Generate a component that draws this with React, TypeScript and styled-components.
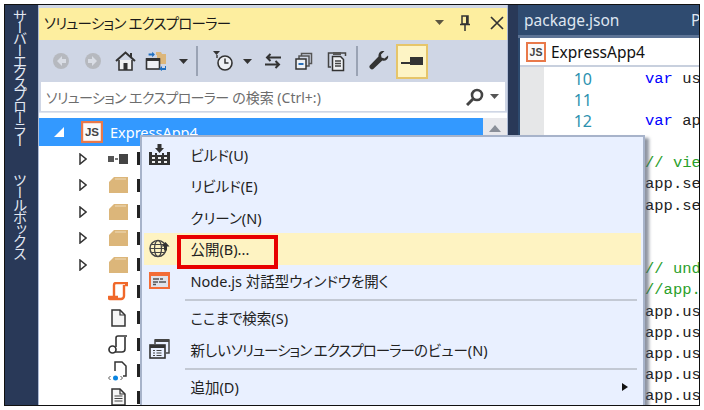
import React from 'react';
import styled, { createGlobalStyle } from 'styled-components';

const Global = createGlobalStyle`
  html, body { margin: 0; padding: 0; background: #fff; }
  body { width: 704px; height: 410px; overflow: hidden; font-family: "Noto Sans", "Noto Sans CJK JP", sans-serif; }
`;
const jp = `font-family: "Noto Sans", "Noto Sans CJK JP", sans-serif; font-feature-settings: "palt";`;

const Frame = styled.div`
  position: relative; box-sizing: border-box;
  margin: 4px 0 0 4px; width: 696px; height: 402px;
  border: 1.5px solid #111; background: #2a3a5a; display: flex; overflow: hidden;
`;
const Sidebar = styled.div`
  width: 32px; flex: none; background: #293958; display: flex; flex-direction: column;
  align-items: center; gap: 30px; padding: 5px 3px 0 0; box-sizing: border-box;
`;
const VText = styled.div<{ $ls: number }>`
  writing-mode: vertical-rl; font-family: "Noto Sans CJK JP", sans-serif; font-feature-settings: "vpal"; color: #e3e8f2; font-size: 14.5px; line-height: 20px; white-space: nowrap;
  letter-spacing: ${p => p.$ls}px;
`;
const Explorer = styled.div`
  width: 470px; flex: none; margin-left: 1px; padding-top: 3px; background: #cfd6e5; display: flex; flex-direction: column; box-sizing: border-box;
  border-left: 1px solid #aebbd4;
  border-right: 1px solid #aebbd4;
`;
const TitleBar = styled.div`
  height: 32px; flex: none; background: #fdee9f; display: flex; align-items: center; padding: 0 3px 0 5px;
`;
const Title = styled.div`
  ${jp} font-size: 14.5px; letter-spacing: -0.8px; color: #1a1a1a; flex: 1; white-space: nowrap; padding-bottom: 3px;
`;
const TitleIcon = styled.div<{ $ml?: number }>`
  display: flex; align-items: center; margin-left: ${p => p.$ml || 0}px; margin-bottom: 3px;
`;
const Toolbar = styled.div`
  height: 42px; flex: none; display: flex; align-items: center; padding-left: 6px; background: #cfd6e5;
`;
const ToolSlot = styled.div<{ $w: number; $active?: boolean }>`
  width: ${p => p.$w}px; height: 35px; flex: none; display: flex; align-items: center; justify-content: center; box-sizing: border-box;
  ${p => p.$active ? 'background: #fdf4c5; border: 2px solid #e6c56a;' : ''}
`;
const ToolSep = styled.div<{ $l: number; $r: number }>`
  width: 2px; height: 30px; flex: none; background: #9aa3b4; margin: 0 ${p => p.$r}px 0 ${p => p.$l}px;
`;
const Search = styled.div`
  height: 29px; flex: none; margin: 0 2px; background: #fff; display: flex; align-items: center; padding: 0 6px 0 5px; box-sizing: border-box;
`;
const SearchText = styled.div`
  ${jp} flex: 1; font-size: 14px; color: #6d6d6d; white-space: nowrap;
`;
const Narrow = styled.span<{ $ls: number }>`letter-spacing: ${p => p.$ls}px;`;
const MagGap = styled.span`width: 6px;`;
const Tree = styled.div`
  flex: 1; background: #fff; margin-top: 1px; position: relative; display: flex; overflow: hidden; padding-top: 5px; border-top: 1px solid #dfe4ee; 
`;
const TreeList = styled.div`
  flex: 1; min-width: 0; background: #fff;
`;
const SelRow = styled.div`
  height: 27.5px; background: #3399ff; display: flex; align-items: center; padding-left: 15px; gap: 17px; color: #fff; ${jp} font-size: 14.5px;
`;
const SelName = styled.span`
  display: flex; align-items: center; gap: 7px;
`;
const Row = styled.div`
  height: 26.5px; display: flex; align-items: center; position: relative; padding-left: 40px; box-sizing: border-box;
`;
const RowIcon = styled.div`
  width: 22px; flex: none; margin-left: 28px; display: flex; justify-content: center;
`;
const Expander = styled.div`
  width: 14px; flex: none; margin-right: -14px; 
`;
const Stub = styled.div`
  width: 3px; height: 13px; background: #222; margin-left: 8px; flex: none;
`;
const Scroll = styled.div`
  width: 24px; flex: none; background: #e8e8ec; display: flex; justify-content: center; padding-top: 7px; align-items: flex-start;
`;
const Splitter = styled.div`
  width: 10px; flex: none; background: #293958;
`;
const Editor = styled.div`
  flex: 1; display: flex; flex-direction: column; background: #2d4a6e; min-width: 0;
`;
const Tabs = styled.div`
  height: 30px; flex: none; display: flex; justify-content: space-between; align-items: center; padding: 0 0 0 6px; color: #dfe6f0; background: #2f4b70;
  font-family: "Noto Sans", sans-serif; font-size: 15.5px; white-space: nowrap;
`;
const TabClip = styled.span`width: 8px; overflow: hidden;`;
const FileBarGap = styled.div`height: 3px; background: #5d7496; flex: none;`;
const FileBar = styled.div`
  height: 29px; flex: none; margin-left: 2px; background: #fff; display: flex; align-items: center; padding-left: 6px; gap: 5px; color: #111;
  font-family: "Noto Sans", sans-serif; font-size: 15.5px; border-bottom: 2px solid #c8d0de; box-sizing: border-box;
`;
const Code = styled.div`
  flex: 1; margin-left: 2px; background: #fff; display: flex; overflow: hidden;
`;
const Gutter = styled.div`width: 24px; flex: none; background: #e6e7e8;`;
const Lines = styled.div`flex: 1; min-width: 0; overflow: hidden; padding-top: 1.5px;`;
const Line = styled.div`
  height: 21.2px; display: flex; white-space: pre; font-family: "Liberation Mono", monospace; font-size: 15.5px; line-height: 21px; color: #222;
`;
const Num = styled.span`
  flex: none; text-align: right; color: #2b91af; font-family: "Noto Sans", sans-serif; font-size: 16px; width: 22px; margin-left: 26px;
`;
const CodeText = styled.span<{ $c?: string }>`
  margin-left: 53px; color: ${p => p.$c || '#222'};
`;
const CodeFull = styled.span<{ $c?: string }>`
  margin-left: 101px; color: ${p => p.$c || '#222'};
`;
const Kw = styled.span`color: #0000ff;`;

const Menu = styled.div`
  position: absolute; left: 134.5px; top: 129.5px; width: 505px; height: 280px; background: #e9f0ff; border: 2px solid #a7b3ca;
  box-shadow: 4px 3px 3px rgba(70,80,100,.6); box-sizing: border-box; padding-top: 2px; display: flex; flex-direction: column;
`;
const MenuRow = styled.div<{ $hi?: boolean }>`
  height: 31.5px; flex: none; display: flex; align-items: center; margin: 0 2px 0 2px;
  ${jp} font-size: 14.5px; color: #222; ${p => p.$hi ? 'background: #fef3c2;' : ''}
`;
const MenuIcon = styled.div`
  width: 32px; height: 100%; flex: none; display: flex; align-items: center; justify-content: center;
`;
const MenuLabel = styled.div`
  flex: 1; margin-left: 15px; white-space: nowrap;
`;
const MenuSep = styled.div`
  height: 2px; flex: none; margin: 2.5px 6px 1.5px 43px; background: #c3c9d4;
`;
const Caret = styled.div`margin-right: 13px; flex: none; width: 0; height: 0; border-left: 6px solid #111; border-top: 4.5px solid transparent; border-bottom: 4.5px solid transparent;`;
const RedBox = styled.div`
  position: absolute; left: 172px; top: 230px; width: 101px; height: 34px; box-sizing: border-box; border: 4px solid #e80000;
`;

const Drop = ({ c = '#333' }: { c?: string }) => (
  <svg width="9" height="5" viewBox="0 0 9 5"><path d="M0 0h9L4.500 5z" fill={c} /></svg>
);
const UpTri = () => (
  <svg width="12" height="7" viewBox="0 0 12 7"><path d="M0 7h12L6 0z" fill="#8a8f99" /></svg>
);
const JsIcon = ({ size = 20 }: { size?: number }) => (
  <svg width={size} height={size} viewBox="0 0 20 20">
    <rect x="1" y="1" width="18" height="18" fill="#fbfbfb" stroke="#e9794a" strokeWidth="2" />
    <text x="10" y="14" fontSize="10.500" fontWeight="700" fontFamily="Liberation Sans, sans-serif" textAnchor="middle" fill="#444">JS</text>
  </svg>
);
const Arrow = ({ flip }: { flip?: boolean }) => (
  <svg width="18" height="18" viewBox="0 0 18 18">
    <circle cx="9" cy="9" r="8" fill="#b6b9bf" />
    <path d={flip ? 'M8 4l5 5-5 5v-3H4V7h4z' : 'M10 4L5 9l5 5v-3h4V7h-4z'} fill="#d9dde5" />
  </svg>
);
const Home = () => (
  <svg width="21" height="20" viewBox="0 0 21 20">
    <path d="M1 10L10.500 1.500 20 10" fill="none" stroke="#333" strokeWidth="2" />
    <path d="M4 9v10h13V9" fill="#f2f2f2" stroke="#333" strokeWidth="1.600" />
    <rect x="8.500" y="12" width="4" height="7" fill="#333" />
    <rect x="15" y="2" width="2" height="5" fill="#333" />
  </svg>
);
const SyncFolder = () => (
  <svg width="22" height="20" viewBox="0 0 22 20">
    <path d="M11 1h5l1 2h4v10h-9V4H11z" fill="#dcb67a" />
    <rect x="1.500" y="8" width="13" height="10" fill="#eef0f4" stroke="#333" strokeWidth="1.600" />
    <rect x="1" y="7" width="14" height="3" fill="#333" />
    <path d="M4 4h4V2l3 3-3 3V6H4z" fill="#1f6fc0" transform="translate(0,-1) scale(.9)" />
    <path d="M20 15v2h-3v-2l-3 3 3 2v-1h4v-4z" fill="#1f6fc0" />
  </svg>
);
const Clock = () => (
  <svg width="22" height="22" viewBox="0 0 22 22">
    <path d="M1 1h7L4.500 5z" fill="#333" />
    <circle cx="13" cy="13" r="7" fill="#eef0f4" stroke="#333" strokeWidth="1.600" />
    <path d="M13 8.500V13h3.500" fill="none" stroke="#333" strokeWidth="1.500" />
    <path d="M5 5v3" stroke="#333" strokeWidth="1.400" />
  </svg>
);
const SwapArrows = () => (
  <svg width="18" height="16" viewBox="0 0 18 16">
    <path d="M17 4.500H3M6.500 1L3 4.500l3.500 3.500M1 11.500h14M11.500 8L15 11.500 11.500 15" fill="none" stroke="#333" strokeWidth="2" />
  </svg>
);
const Collapse = () => (
  <svg width="18" height="18" viewBox="0 0 18 18">
    <rect x="6.500" y="1.500" width="10" height="10" fill="none" stroke="#555" strokeWidth="1.500" />
    <rect x="4" y="4" width="10" height="10" fill="#cfd6e5" stroke="#555" strokeWidth="1.500" />
    <rect x="1" y="7" width="10" height="10" fill="#eef0f4" stroke="#333" strokeWidth="1.500" />
    <rect x="3.500" y="11" width="5" height="2" fill="#2a6fb8" />
  </svg>
);
const CopyPages = () => (
  <svg width="20" height="21" viewBox="0 0 20 21">
    <path d="M4 16H1.500V2H6M14 2h4.500v3" fill="none" stroke="#444" strokeWidth="1.500" />
    <path d="M5.500 5.500h8l3 3v11h-11z" fill="#eef0f4" stroke="#333" strokeWidth="1.500" />
    <path d="M8 10h6M8 12.500h6M8 15h6" stroke="#444" strokeWidth="1.300" />
    <rect x="6" y="1" width="8" height="3" fill="#555" />
  </svg>
);
const Wrench = () => (
  <svg width="20" height="20" viewBox="0 0 20 20">
    <path d="M19 4.500l-3.500 3-3-1-.5-3L15.500 0c-3-.8-6.500 1.500-6 5.500L.8 14.500c-1.500 2 1.500 5 3.500 3.500l9-8.500c3.500 1 6.800-1.700 5.700-5z" fill="#333" />
  </svg>
);
const Dock = () => (
  <svg width="22" height="10" viewBox="0 0 22 10">
    <rect x="0" y="6" width="22" height="2" fill="#333" />
    <rect x="9" y="1" width="13" height="8" fill="#333" />
  </svg>
);
const Pin = () => (
  <svg width="12" height="16" viewBox="0 0 12 16">
    <path d="M3 1h6v8H3z" fill="none" stroke="#333" strokeWidth="1.500" />
    <rect x="7" y="1" width="2" height="8" fill="#333" />
    <path d="M1 9.500h10M6 9.500V16" stroke="#333" strokeWidth="1.500" />
  </svg>
);
const Close = () => (
  <svg width="14" height="14" viewBox="0 0 14 14"><path d="M1 1l12 12M13 1L1 13" stroke="#333" strokeWidth="1.700" /></svg>
);
const Magnifier = () => (
  <svg width="18" height="18" viewBox="0 0 18 18">
    <circle cx="11" cy="7" r="5" fill="none" stroke="#444" strokeWidth="2.600" />
    <path d="M7 11l-6 6" stroke="#444" strokeWidth="3" />
  </svg>
);
const Tri = () => (
  <svg width="8" height="12" viewBox="0 0 8 12"><path d="M1 1l6 5-6 5z" fill="#fff" stroke="#333" strokeWidth="1.500" /></svg>
);
const Folder = () => (
  <svg width="19" height="16" viewBox="0 0 19 16"><path d="M0 5l5-5h14v16H0z" fill="#dcb67a" /><path d="M6 2h11" stroke="#efdcbb" /></svg>
);
const Refs = () => (
  <svg width="20" height="10" viewBox="0 0 20 10"><rect x="0" y="2" width="6" height="6" fill="#555" /><rect x="7" y="4" width="3" height="2" fill="#777" /><rect x="11" y="0" width="9" height="10" fill="#444" /></svg>
);
const OrangeScroll = () => (
  <svg width="20" height="19" viewBox="0 0 20 19">
    <path d="M6 16V3a2 2 0 0 1 2-2h11v2h-2M16 3v11a3 3 0 0 1-3 3H2c-1 0-1.500-1-1-2h9" fill="none" stroke="#f0682a" strokeWidth="2.400" />
  </svg>
);
const Doc = ({ lines }: { lines?: boolean }) => (
  <svg width="15" height="18" viewBox="0 0 15 18">
    <path d="M1 1h8l5 5v11H1z" fill="#f6f6f6" stroke="#333" strokeWidth="1.500" />
    <path d="M9 1v5h5" fill="none" stroke="#333" strokeWidth="1.200" />
    {lines && <path d="M3.500 8h8M3.500 10.500h8M3.500 13h8" stroke="#444" strokeWidth="1.100" />}
  </svg>
);
const DarkScroll = () => (
  <svg width="20" height="19" viewBox="0 0 20 19">
    <path d="M8 12V3a2 2 0 0 1 2-2h9M17 2v12a3 3 0 0 1-3 3H7" fill="none" stroke="#333" strokeWidth="1.600" />
    <circle cx="4.500" cy="14.500" r="3.500" fill="#fff" stroke="#333" strokeWidth="1.700" />
  </svg>
);
const HtmlDoc = () => (
  <svg width="21" height="20" viewBox="0 0 21 20">
    <path d="M7 10V1h7l4 4v10h-3" fill="#fff" stroke="#333" strokeWidth="1.500" />
    <circle cx="7.500" cy="17" r="2.500" fill="#0a84e0" />
    <path d="M2.500 15l-2 2 2 2M12.500 15l2 2-2 2" fill="none" stroke="#444" strokeWidth=".9" />
  </svg>
);
const Build = () => (
  <svg width="21" height="21" viewBox="0 0 21 21">
    <path d="M8.500 0h4v4H15l-4.500 5L6 4h2.500z" fill="#333" />
    <path d="M0 8l3 0v3h3V9h2v2h5V9h2v2h3V8h3v13H0z" fill="#333" />
    <g fill="#eee"><rect x="3" y="13" width="3" height="2" /><rect x="9" y="13" width="3" height="2" /><rect x="15" y="13" width="3" height="2" /><rect x="3" y="17" width="3" height="2" /><rect x="9" y="17" width="3" height="2" /><rect x="15" y="17" width="3" height="2" /></g>
  </svg>
);
const Globe = () => (
  <svg width="21" height="19" viewBox="0 0 21 19">
    <circle cx="9" cy="9.500" r="8" fill="none" stroke="#444" strokeWidth="1.500" />
    <ellipse cx="9" cy="9.500" rx="3.500" ry="8" fill="none" stroke="#444" strokeWidth="1.200" />
    <path d="M1 9.500h16M2.500 5.500h13M2.500 13.500h13" stroke="#444" strokeWidth="1.100" />
    <path d="M16.500 3l4 4.500h-2.500v4h-3v-4H12.500z" fill="#333" />
  </svg>
);
const NodeWin = () => (
  <svg width="21" height="17" viewBox="0 0 21 17">
    <rect x="0" y="0" width="21" height="17" fill="#f36d36" />
    <rect x="2" y="4" width="17" height="11" fill="#dfe3ea" />
    <path d="M4 7h6M11 7h3M4 10h5M10 10h7M4 12.500h3" stroke="#555" strokeWidth="1.300" />
  </svg>
);
const NewView = () => (
  <svg width="21" height="20" viewBox="0 0 21 20">
    <path d="M6 5V1h14v13h-3" fill="none" stroke="#444" strokeWidth="1.500" />
    <rect x="6" y="0" width="14" height="3" fill="#444" />
    <rect x="1" y="6" width="15" height="13" fill="#e9f0ff" stroke="#333" strokeWidth="1.600" />
    <rect x="1" y="6" width="15" height="3" fill="#333" />
    <path d="M4 11.500h2M7.500 11.500h5M4 14h2M7.500 14h5M4 16.500h2M7.500 16.500h5" stroke="#444" strokeWidth="1.100" />
  </svg>
);

const rows: [React.ReactNode, boolean][] = [
  [<Refs />, true], [<Folder />, true], [<Folder />, true], [<Folder />, true], [<Folder />, true],
  [<OrangeScroll />, false], [<Doc />, false], [<DarkScroll />, false], [<HtmlDoc />, false], [<Doc lines />, false],
];

export default function App() {
  return (
    <>
      <Global />
      <Frame>
        <Sidebar>
          <VText $ls={-2.5}>サーバー エクスプローラー</VText>
          <VText $ls={-1.2}>ツールボックス</VText>
        </Sidebar>
        <Explorer>
          <TitleBar>
            <Title>ソリューション エクスプローラー</Title>
            <TitleIcon><Drop c="#5c5640" /></TitleIcon>
            <TitleIcon $ml={15}><Pin /></TitleIcon>
            <TitleIcon $ml={19}><Close /></TitleIcon>
          </TitleBar>
          <Toolbar>
            <ToolSlot $w={32}><Arrow /></ToolSlot>
            <ToolSlot $w={32}><Arrow flip /></ToolSlot>
            <ToolSlot $w={32}><Home /></ToolSlot>
            <ToolSlot $w={30}><SyncFolder /></ToolSlot>
            <ToolSlot $w={24}><Drop /></ToolSlot>
            <ToolSep $l={1} $r={12} />
            <ToolSlot $w={26}><Clock /></ToolSlot>
            <ToolSlot $w={22}><Drop /></ToolSlot>
            <ToolSlot $w={30}><SwapArrows /></ToolSlot>
            <ToolSlot $w={32}><Collapse /></ToolSlot>
            <ToolSlot $w={34}><CopyPages /></ToolSlot>
            <ToolSep $l={2} $r={4} />
            <ToolSlot $w={34}><Wrench /></ToolSlot>
            <ToolSlot $w={32} $active><Dock /></ToolSlot>
          </Toolbar>
          <Search>
            <SearchText><Narrow $ls={-0.6}>ソリューション エクスプローラー</Narrow> の検索 (Ctrl+:)</SearchText>
            <Magnifier />
            <MagGap />
            <Drop c="#555" />
          </Search>
          <Tree>
            <TreeList>
              <SelRow>
                <svg width="10" height="10" viewBox="0 0 10 10"><path d="M10 0v10H0z" fill="#fff" /></svg>
                <SelName><JsIcon size={22} />ExpressApp4</SelName>
              </SelRow>
              {rows.map(([icon, exp], i) => (
                <Row key={i}>
                  <Expander>{exp && <Tri />}</Expander>
                  <RowIcon>{icon}</RowIcon>
                  <Stub />
                </Row>
              ))}
            </TreeList>
            <Scroll><UpTri /></Scroll>
          </Tree>
        </Explorer>
        <Splitter />
        <Editor>
          <Tabs><span>package.json</span><TabClip>P</TabClip></Tabs>
          <FileBarGap />
          <FileBar><JsIcon />ExpressApp4</FileBar>
          <Code>
            <Gutter />
            <Lines>
              <Line><Num>10</Num><CodeText><Kw>var</Kw> us</CodeText></Line>
              <Line><Num>11</Num></Line>
              <Line><Num>12</Num><CodeText><Kw>var</Kw> ap</CodeText></Line>
              <Line />
              <Line><CodeFull $c="#2aa02a">// vie</CodeFull></Line>
              <Line><CodeFull>app.se</CodeFull></Line>
              <Line><CodeFull>app.se</CodeFull></Line>
              <Line />
              <Line />
              <Line><CodeFull $c="#2aa02a">// und</CodeFull></Line>
              <Line><CodeFull $c="#2aa02a">//app.</CodeFull></Line>
              <Line><CodeFull>app.us</CodeFull></Line>
              <Line><CodeFull>app.us</CodeFull></Line>
              <Line><CodeFull>app.us</CodeFull></Line>
              <Line><CodeFull>app.us</CodeFull></Line>
              <Line><CodeFull>app.us</CodeFull></Line>
            </Lines>
          </Code>
        </Editor>
        <Menu>
          <MenuRow><MenuIcon><Build /></MenuIcon><MenuLabel>ビルド(U)</MenuLabel></MenuRow>
          <MenuRow><MenuIcon /><MenuLabel>リビルド(E)</MenuLabel></MenuRow>
          <MenuRow><MenuIcon /><MenuLabel>クリーン(N)</MenuLabel></MenuRow>
          <MenuRow $hi><MenuIcon><Globe /></MenuIcon><MenuLabel>公開(B)...</MenuLabel></MenuRow>
          <MenuRow><MenuIcon><NodeWin /></MenuIcon><MenuLabel>Node.js 対話型ウィンドウを開く</MenuLabel></MenuRow>
          <MenuSep />
          <MenuRow><MenuIcon /><MenuLabel>ここまで検索(S)</MenuLabel></MenuRow>
          <MenuRow><MenuIcon><NewView /></MenuIcon><MenuLabel>新しい<Narrow $ls={-1}>ソリューション エクスプローラー</Narrow>のビュー(N)</MenuLabel></MenuRow>
          <MenuSep />
          <MenuRow><MenuIcon /><MenuLabel>追加(D)</MenuLabel><Caret /></MenuRow>
        </Menu>
        <RedBox />
      </Frame>
    </>
  );
}
